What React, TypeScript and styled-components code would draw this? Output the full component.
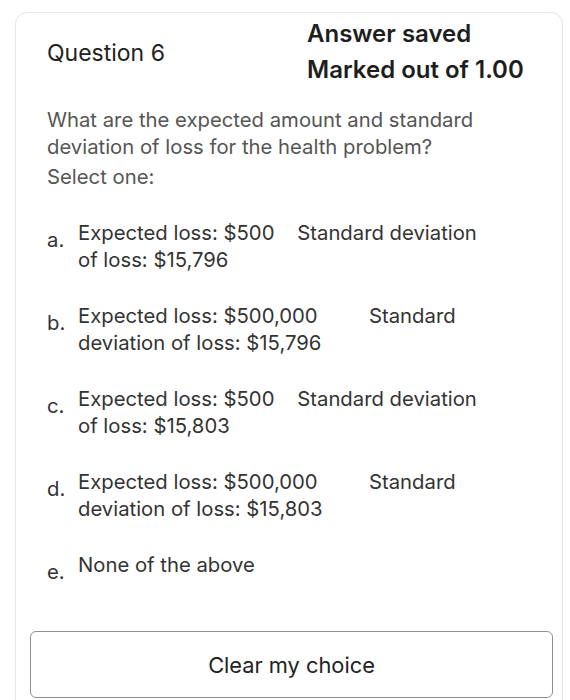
import React from "react";
import styled, { createGlobalStyle } from "styled-components";

const Global = createGlobalStyle`
  html, body { margin: 0; padding: 0; background: #ffffff; }
  body { font-family: Inter, "Liberation Sans", Arial, sans-serif; -webkit-font-smoothing: antialiased; }
`;

const Page = styled.div`
  width: 570px;
  height: 700px;
  overflow: hidden;
  padding: 12px 0 0 15px;
  box-sizing: border-box;
`;

const Card = styled.div`
  width: 548px;
  min-height: 760px;
  box-sizing: border-box;
  border: 1px solid #e4e4e4;
  border-radius: 12px;
  padding: 0 0 0 31px;
`;

const Header = styled.div`
  display: flex;
  align-items: flex-start;
`;

const QTitle = styled.div`
  width: 260px;
  font-size: 23px;
  line-height: 26px;
  color: #222;
  padding-top: 27px;
`;

const Info = styled.div`
  display: flex;
  flex-direction: column;
  gap: 10px;
  padding-top: 8px;
`;

const InfoLine = styled.div`
  font-size: 24px;
  line-height: 26px;
  font-weight: 600;
  color: #1e1e1e;
`;

const Prompt = styled.div`
  margin-top: 24px;
  width: 470px;
  font-size: 20.3px;
  line-height: 26.5px;
  color: #555;
`;

const SelectOne = styled.div`
  margin-top: 3px;
  font-size: 20.3px;
  line-height: 27px;
  color: #555;
`;

const Options = styled.div`
  margin-top: 29px;
  display: flex;
  flex-direction: column;
  gap: 29px;
`;

const Option = styled.div`
  display: flex;
  align-items: flex-start;
`;

const Letter = styled.span`
  width: 31px;
  flex: none;
  font-size: 20.3px;
  line-height: 27px;
  padding-top: 7px;
  color: #333;
`;

const Label = styled.div`
  width: 410px;
  font-size: 20.3px;
  line-height: 27px;
  color: #333;
`;

const ClearButton = styled.button`
  display: block;
  margin: 46px 0 0 -17px;
  width: 523px;
  height: 67px;
  box-sizing: border-box;
  background: #fff;
  border: 1.5px solid #8f8f8f;
  border-radius: 6px;
  font-family: inherit;
  font-size: 21.8px;
  color: #222;
  cursor: pointer;
`;

const nb = (n: number) => "\u00a0".repeat(n);

const options = [
  { letter: "a.", text: `Expected loss: $500${nb(3)} Standard deviation of loss: $15,796` },
  { letter: "b.", text: `Expected loss: $500,000${nb(8)} Standard deviation of loss: $15,796` },
  { letter: "c.", text: `Expected loss: $500${nb(3)} Standard deviation of loss: $15,803` },
  { letter: "d.", text: `Expected loss: $500,000${nb(8)} Standard deviation of loss: $15,803` },
  { letter: "e.", text: "None of the above" },
];

export default function App() {
  return (
    <>
      <Global />
      <Page>
        <Card>
          <Header>
            <QTitle>Question 6</QTitle>
            <Info>
              <InfoLine>Answer saved</InfoLine>
              <InfoLine>Marked out of 1.00</InfoLine>
            </Info>
          </Header>
          <Prompt>What are the expected amount and standard deviation of loss for the health problem?</Prompt>
          <SelectOne>Select one:</SelectOne>
          <Options>
            {options.map((o) => (
              <Option key={o.letter}>
                <Letter>{o.letter}</Letter>
                <Label>{o.text}</Label>
              </Option>
            ))}
          </Options>
          <ClearButton type="button">Clear my choice</ClearButton>
        </Card>
      </Page>
    </>
  );
}
